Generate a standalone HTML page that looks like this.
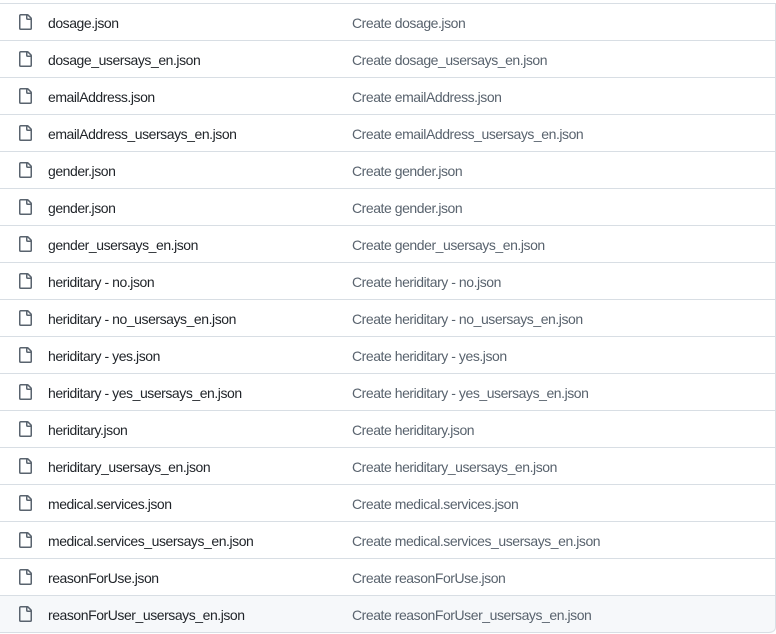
<!DOCTYPE html>
<html><head><meta charset="utf-8"><style>
body{margin:0;background:#fff;width:776px;height:634px;overflow:hidden;font-family:"Liberation Sans",sans-serif;font-size:14px;}
.t{position:absolute;left:0;top:3px;width:775px;border-top:1px solid #d8dee4;border-right:1px solid #d8dee4;border-bottom-right-radius:6px;}
.r{position:relative;height:36px;border-bottom:1px solid #d8dee4;}
.r:last-child{background:#f6f8fa;border-bottom-right-radius:6px;}
.r svg{position:absolute;left:17px;top:10px}
.n{position:absolute;left:48px;top:11px;color:#1f2328;letter-spacing:-0.45px}
.m{position:absolute;left:352px;top:11px;color:#59636e;letter-spacing:-0.45px}
</style></head><body><div class="t">
<script>
var f=["dosage.json","dosage_usersays_en.json","emailAddress.json","emailAddress_usersays_en.json","gender.json","gender.json","gender_usersays_en.json","heriditary - no.json","heriditary - no_usersays_en.json","heriditary - yes.json","heriditary - yes_usersays_en.json","heriditary.json","heriditary_usersays_en.json","medical.services.json","medical.services_usersays_en.json","reasonForUse.json","reasonForUser_usersays_en.json"];
var ic='<svg width="16" height="16" viewBox="0 0 16 16"><path fill="#59636e" d="M2 1.75C2 .784 2.784 0 3.75 0h6.586c.464 0 .909.184 1.237.513l2.914 2.914c.329.328.513.773.513 1.237v9.586A1.750 1.75 0 0 1 13.25 16h-9.5A1.75 1.75 0 0 1 2 14.25Zm1.75-.25a.25.25 0 0 0-.25.25v12.5c0 .138.112.25.25.25h9.5a.25.25 0 0 0 .25-.25V6h-2.75A1.75 1.75 0 0 1 9 4.25V1.5Zm6.75.062V4.25c0 .138.112.25.25.25h2.688l-.011-.013-2.914-2.914-.013-.011Z"/></svg>';
for(var i=0;i<f.length;i++)document.write('<div class="r">'+ic+'<span class="n">'+f[i]+'</span><span class="m">Create '+f[i]+'</span></div>');
</script>
</div></body></html>
